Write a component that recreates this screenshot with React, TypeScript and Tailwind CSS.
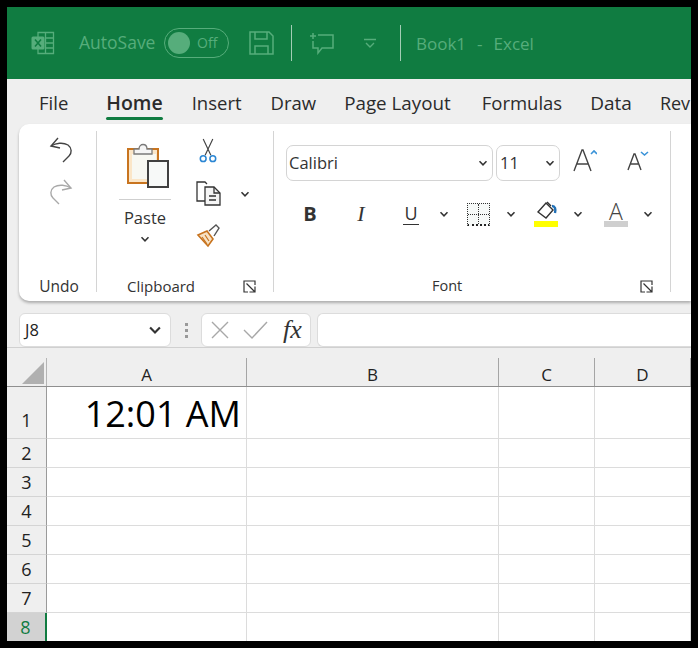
import React from "react";

const FONT = { fontFamily: '"Open Sans", "Noto Sans", sans-serif' };

function Chevron({ size = 10, className = "", color = "#333" }: { size?: number; className?: string; color?: string }) {
  return (
    <svg width={size} height={size} viewBox="0 0 10 10" className={className} fill="none" stroke={color} strokeWidth="1.5">
      <path d="M1.5 3.2 5 6.8 8.5 3.2" />
    </svg>
  );
}

function Launcher() {
  return (
    <svg width="13" height="13" viewBox="0 0 13 13" fill="none" stroke="#333" strokeWidth="1.2">
      <path d="M12 5V1H1v11h4" />
      <path d="M3.5 3.5 11.5 11.5M6.5 12H12V6.5" />
    </svg>
  );
}

const rows = [
  { n: "1", h: "h-[52px]" },
  { n: "2", h: "h-[29px]" },
  { n: "3", h: "h-[29px]" },
  { n: "4", h: "h-[29px]" },
  { n: "5", h: "h-[29px]" },
  { n: "6", h: "h-[29px]" },
  { n: "7", h: "h-[29px]" },
  { n: "8", h: "h-[29px]" },
];

export default function App() {
  return (
    <div className="w-[698px] h-[648px] bg-black p-[7px]" style={FONT}>
      <div className="w-[684px] h-[634px] bg-[#efefef] flex flex-col overflow-hidden">
        {/* Title bar */}
        <div className="h-[72px] shrink-0 bg-[#107c41] flex items-center text-[#56ad7b]">
          <svg width="24" height="24" viewBox="0 0 24 24" className="ml-[24px]" fill="none">
            <path d="M7 1.5h15.5v21H7z" stroke="#56ad7b" strokeWidth="1.3" />
            <path d="M14.5 1.5v21M14.5 7h8M14.5 12h8M14.5 17h8" stroke="#56ad7b" strokeWidth="1.3" />
            <rect x="0.5" y="5.5" width="13" height="13" rx="1.5" fill="#56ad7b" />
            <path d="M4 8.5 10 15.5M10 8.5 4 15.5" stroke="#107c41" strokeWidth="1.6" />
          </svg>
          <span className="ml-[24px] text-[17.5px] leading-none w-[85px]">AutoSave</span>
          <div className="w-[65px] h-[30px] rounded-full border border-[#56ad7b] flex items-center">
            <div className="ml-[3px] w-[22px] h-[22px] rounded-full bg-[#56ad7b]" />
            <span className="ml-[7px] text-[14px] leading-none">Off</span>
          </div>
          <svg width="25" height="24" viewBox="0 0 25 24" className="ml-[20px]" fill="none" stroke="#56ad7b" strokeWidth="1.5">
            <path d="M1 1h19l4 4v18H1z" />
            <path d="M6 1v7h12V1M6 23v-8h13v8" />
          </svg>
          <div className="ml-[17px] w-px h-[36px] bg-[#a3cdb5]" />
          <svg width="24" height="23" viewBox="0 0 24 23" className="ml-[18px]" fill="none" stroke="#56ad7b" strokeWidth="1.5">
            <path d="M8 3h15v13H12l-4 5v-5H3V9" />
            <path d="M3 1v6M0 4h6" />
          </svg>
          <svg width="14" height="11" viewBox="0 0 14 11" className="ml-[29px]" fill="none" stroke="#56ad7b" strokeWidth="1.4">
            <path d="M1 1.5h12M3 5l4 4 4-4" />
          </svg>
          <div className="ml-[23px] w-px h-[36px] bg-[#a3cdb5]" />
          <span className="ml-[15px] text-[17px] leading-none">Book1</span>
          <span className="ml-[11px] text-[17px] leading-none">-</span>
          <span className="ml-[11px] text-[17px] leading-none">Excel</span>
        </div>

        {/* Tabs */}
        <div className="h-[45px] shrink-0 flex items-start text-[18.5px] text-[#2b2b2b] whitespace-nowrap">
          <span className="ml-[32px] mt-[11px] leading-[26px]">File</span>
          <span className="ml-[38px] mt-[11px] leading-[26px] font-semibold text-[19.5px] relative">
            Home
            <span className="absolute left-0 right-0 top-[27px] h-[3px] rounded-sm bg-[#107c41]" />
          </span>
          <span className="ml-[29px] mt-[11px] leading-[26px]">Insert</span>
          <span className="ml-[29px] mt-[11px] leading-[26px]">Draw</span>
          <span className="ml-[28px] mt-[11px] leading-[26px] text-[18.8px]">Page Layout</span>
          <span className="ml-[31px] mt-[11px] leading-[26px]">Formulas</span>
          <span className="ml-[28px] mt-[11px] leading-[26px] text-[19px]">Data</span>
          <span className="ml-[28px] mt-[11px] leading-[26px] text-[18px]">Rev</span>
        </div>

        {/* Ribbon */}
        <div className="ml-[12px] h-[177px] shrink-0 bg-white rounded-l-[10px] shadow-[0_2px_3px_rgba(0,0,0,0.28)] flex pt-[7px] pb-[9px] text-[#333] overflow-hidden">
          {/* Undo */}
          <div className="w-[78px] shrink-0 border-r border-[#d4d4d4] flex flex-col items-center">
            <svg width="24" height="26" viewBox="0 0 24 26" className="mt-[6px] ml-[6px]" fill="none" stroke="#444" strokeWidth="1.4">
              <path d="M9 1 2 9l9 2" />
              <path d="M2 9c5-3 12-4 17-1 4 3 4 8 1 11l-6 6" />
            </svg>
            <svg width="24" height="26" viewBox="0 0 24 26" className="mt-[16px] ml-[6px]" fill="none" stroke="#a9a9a9" strokeWidth="1.4">
              <path d="M15 1l7 8-9 2" />
              <path d="M22 9C17 6 10 5 5 8c-4 3-4 8-1 11l6 6" />
            </svg>
            <span className="mt-auto text-[15.5px] leading-[20px] ml-[3px] mb-[-4px]">Undo</span>
          </div>

          {/* Clipboard */}
          <div className="w-[177px] shrink-0 border-r border-[#d4d4d4] flex flex-col">
            <div className="flex">
              <div className="w-[96px] flex flex-col items-center">
                <svg width="44" height="47" viewBox="0 0 44 47" className="mt-[11px] ml-[8px]" fill="none">
                  <rect x="1" y="7" width="30" height="34" fill="#fbe6c8" stroke="#c8741f" strokeWidth="2" />
                  <rect x="5" y="12" width="24" height="25" fill="#f8f8f2" />
                  <path d="M7 12V7h5c0-6 8-6 8 0h5v5z" fill="#f5f5f5" stroke="#7a7a7a" strokeWidth="1.3" />
                  <rect x="21" y="19" width="20" height="26" fill="#f7f9f8" stroke="#404040" strokeWidth="2" />
                </svg>
                <div className="w-[52px] h-px bg-[#cfcfcf] mt-[10px]" />
                <span className="text-[16.5px] leading-[22px] mt-[7px]">Paste</span>
                <Chevron className="mt-[5px]" />
              </div>
              <div className="flex flex-col items-start pt-[7px]">
                <svg width="18" height="25" viewBox="0 0 18 26" className="ml-[6px]" fill="none">
                  <path d="M4 1 12 18M14 1 6 18" stroke="#444" strokeWidth="1.2" />
                  <circle cx="4" cy="21.5" r="3" stroke="#2b86d3" strokeWidth="1.6" />
                  <circle cx="14" cy="21.5" r="3" stroke="#2b86d3" strokeWidth="1.6" />
                </svg>
                <div className="flex items-center mt-[18px] ml-[3px]">
                  <svg width="25" height="25" viewBox="0 0 25 25" fill="none" stroke="#333" strokeWidth="1.3">
                    <path d="M10 20H1V1h8l2 2" />
                    <path d="M9 6h9l6 6v12H9z" fill="#f5f5f5" />
                    <path d="M18 6v6h6M13 15h7M13 19h7" />
                  </svg>
                  <Chevron className="ml-[19px]" />
                </div>
                <svg width="25" height="24" viewBox="0 0 25 24" className="ml-[3px] mt-[18px]" fill="none">
                  <path d="M2 11 11 7l6 8-5 7z" fill="#f7e2c4" stroke="#c8741f" strokeWidth="1.6" />
                  <path d="M6 13l5 7M9 11l4 6" stroke="#c8741f" strokeWidth="1.2" />
                  <path d="M13 7 20 1l3 3-5 8" fill="#fff" stroke="#555" strokeWidth="1.4" />
                </svg>
              </div>
            </div>
            <div className="mt-auto relative mb-[-4px] h-[20px] flex items-center">
              <span className="ml-[30px] text-[15px] leading-[20px]">Clipboard</span>
              <span className="ml-auto mr-[17px] flex mt-[1px]"><Launcher /></span>
            </div>
          </div>

          {/* Font */}
          <div className="w-[397px] shrink-0 border-r border-[#d4d4d4] flex flex-col">
            <div className="flex items-center mt-[14px] ml-[12px]">
              <div className="w-[207px] h-[36px] border border-[#d4d4d4] rounded-[7px] flex items-center pl-[2px] pr-[4px] text-[16.5px]">
                Calibri
                <Chevron className="ml-auto" />
              </div>
              <div className="w-[64px] h-[36px] ml-[3px] border border-[#d4d4d4] rounded-[7px] flex items-center pl-[3px] pr-[4px] text-[16.5px]">
                11
                <Chevron className="ml-auto" />
              </div>
              <div className="relative ml-[13px] w-[24px] h-[24px] mb-[6px]">
                <svg width="24" height="24" viewBox="0 0 24 24" fill="none">
                  <path d="M1 23 9 2h1l8 21M4 16h11" stroke="#444" strokeWidth="1.4" />
                  <path d="M18 6l3-3 3 3" stroke="#3a93d8" strokeWidth="1.6" />
                </svg>
              </div>
              <div className="relative ml-[30px] w-[24px] h-[20px] mb-[4px]">
                <svg width="24" height="20" viewBox="0 0 24 20" fill="none">
                  <path d="M1 19 7 3h1l6 16M3 13h9" stroke="#444" strokeWidth="1.4" />
                  <path d="M14 1l3.5 3L21 1" stroke="#3a93d8" strokeWidth="1.6" />
                </svg>
              </div>
            </div>
            <div className="flex items-center mt-[19px] ml-[12px] h-[28px]">
              <div className="w-[48px] text-center font-bold text-[20px] leading-none">B</div>
              <div className="w-[54px] text-center italic text-[22px] leading-none" style={{ fontFamily: '"Liberation Serif", serif' }}>I</div>
              <div className="w-[46px] flex justify-center">
                <span className="text-[18px] leading-[21px] border-b-[1.5px] border-[#333] px-[1px]">U</span>
              </div>
              <div className="w-[20px] flex justify-center"><Chevron /></div>
              <div className="w-[48px] flex justify-center">
                <div className="w-[23px] h-[23px] border-t border-l border-r border-dotted border-[#333] border-b-2 border-b-[#222] relative bg-[#f6f9f8]">
                  <div className="absolute left-[10px] top-0 bottom-0 border-l border-dotted border-[#333]" />
                  <div className="absolute top-[10px] left-0 right-0 border-t border-dotted border-[#333]" />
                </div>
              </div>
              <div className="w-[18px] flex justify-center"><Chevron /></div>
              <div className="w-[52px] flex flex-col items-center">
                <svg width="24" height="20" viewBox="0 0 24 20" fill="none">
                  <path d="M4 11 12 2l7 7-7 8z" fill="#fff" stroke="#333" strokeWidth="1.4" />
                  <path d="M13 1l4 4" stroke="#333" strokeWidth="1.4" />
                  <path d="M18 5c3 0 4 3 3 7" stroke="#1f6fb5" strokeWidth="2.4" />
                </svg>
                <div className="w-[24px] h-[6px] bg-[#ffff00]" />
              </div>
              <div className="w-[12px] flex justify-center"><Chevron /></div>
              <div className="ml-[10px] w-[44px] flex flex-col items-center">
                <span className="text-[23px] leading-[20px] font-light text-[#444]">A</span>
                <div className="w-[24px] h-[6px] bg-[#cfcfcf]" />
              </div>
              <div className="w-[20px] flex justify-center"><Chevron /></div>
            </div>
            <div className="mt-auto relative mb-[-4px] h-[20px] flex items-center">
              <span className="ml-[158px] text-[14.5px] leading-[20px]">Font</span>
              <span className="ml-auto mr-[17px] flex mt-[1px]"><Launcher /></span>
            </div>
          </div>
        </div>

        {/* Formula bar */}
        <div className="h-[34px] mt-[12px] shrink-0 flex items-stretch">
          <div className="ml-[12px] w-[152px] bg-white rounded-[6px] border border-[#dcdcdc] flex items-center pl-[5px] pr-[8px] text-[16.5px] text-[#222]">
            J8
            <Chevron size={14} className="ml-auto" />
          </div>
          <div className="w-[30px] flex flex-col items-center justify-center gap-[3px]">
            <span className="w-[3px] h-[3px] bg-[#999]" />
            <span className="w-[3px] h-[3px] bg-[#999]" />
            <span className="w-[3px] h-[3px] bg-[#999]" />
          </div>
          <div className="w-[110px] bg-white rounded-[6px] border border-[#dcdcdc] flex items-center pl-[9px]">
            <svg width="18" height="18" viewBox="0 0 18 18" fill="none" stroke="#a8a8a8" strokeWidth="1.4">
              <path d="M1 1l16 16M17 1 1 17" />
            </svg>
            <svg width="25" height="18" viewBox="0 0 25 18" className="ml-[14px]" fill="none" stroke="#a8a8a8" strokeWidth="1.4">
              <path d="M1 9l8 8L24 1" />
            </svg>
            <span className="ml-[15px] italic text-[26px] leading-none text-[#333]" style={{ fontFamily: '"Liberation Serif", serif' }}>fx</span>
          </div>
          <div className="ml-[6px] flex-1 bg-white rounded-l-[6px] border-y border-l border-[#dcdcdc]" />
        </div>

        {/* Sheet */}
        <div className="flex-1 min-h-0 flex flex-col text-[#222]">
          <div className="shrink-0 h-[40px] border-t border-[#d0d0d0] flex items-stretch border-b border-b-[#8f8f8f] bg-[#efefef] text-[17px]">
            <div className="w-[40px] shrink-0 flex items-end justify-end pr-[2px] pb-[2px] border-r border-[#b5b5b5] mt-[10px]">
              <svg width="22" height="22" viewBox="0 0 22 22"><path d="M22 0v22H0z" fill="#b0b0b0" /></svg>
            </div>
            <div className="w-[200px] shrink-0 mt-[10px] border-r border-[#a5a5a5] flex items-center justify-center leading-none pt-[4px]">A</div>
            <div className="w-[252px] shrink-0 mt-[10px] border-r border-[#a5a5a5] flex items-center justify-center leading-none pt-[4px]">B</div>
            <div className="w-[96px] shrink-0 mt-[10px] border-r border-[#a5a5a5] flex items-center justify-center leading-none pt-[4px]">C</div>
            <div className="w-[96px] shrink-0 mt-[10px] border-r border-[#a5a5a5] flex items-center justify-center leading-none pt-[4px]">D</div>
          </div>
          {rows.map((r, i) => (
            <div key={r.n} className={`${r.h} shrink-0 flex bg-white`}>
              <div
                className={
                  i === 7
                    ? "w-[40px] shrink-0 bg-[#d2d2d2] text-[#107c41] border-r-2 border-[#107c41] flex items-end justify-center pb-[1px] pr-[1px] text-[18px] leading-[27px]"
                    : i === 0
                    ? "w-[40px] shrink-0 bg-[#efefef] border-r border-[#9a9a9a] border-b border-b-[#d4d4d4] flex items-end justify-center pb-[4px] text-[18px] leading-[27px]"
                    : "w-[40px] shrink-0 bg-[#efefef] border-r border-[#9a9a9a] border-b border-b-[#d4d4d4] flex items-end justify-center text-[18px] leading-[27px]"
                }
              >
                {r.n}
              </div>
              <div className={`w-[200px] shrink-0 border-r border-[#dcdcdc] ${i === 7 ? "" : "border-b border-b-[#dcdcdc]"} flex items-end justify-end`}>
                {i === 0 && <span className="text-[36px] leading-[48px] text-black pr-[5px]">12:01 AM</span>}
              </div>
              <div className={`w-[252px] shrink-0 border-r border-[#dcdcdc] ${i === 7 ? "" : "border-b border-b-[#dcdcdc]"}`} />
              <div className={`w-[96px] shrink-0 border-r border-[#dcdcdc] ${i === 7 ? "" : "border-b border-b-[#dcdcdc]"}`} />
              <div className={`w-[96px] shrink-0 border-r border-[#dcdcdc] ${i === 7 ? "" : "border-b border-b-[#dcdcdc]"}`} />
            </div>
          ))}
        </div>
      </div>
    </div>
  );
}
